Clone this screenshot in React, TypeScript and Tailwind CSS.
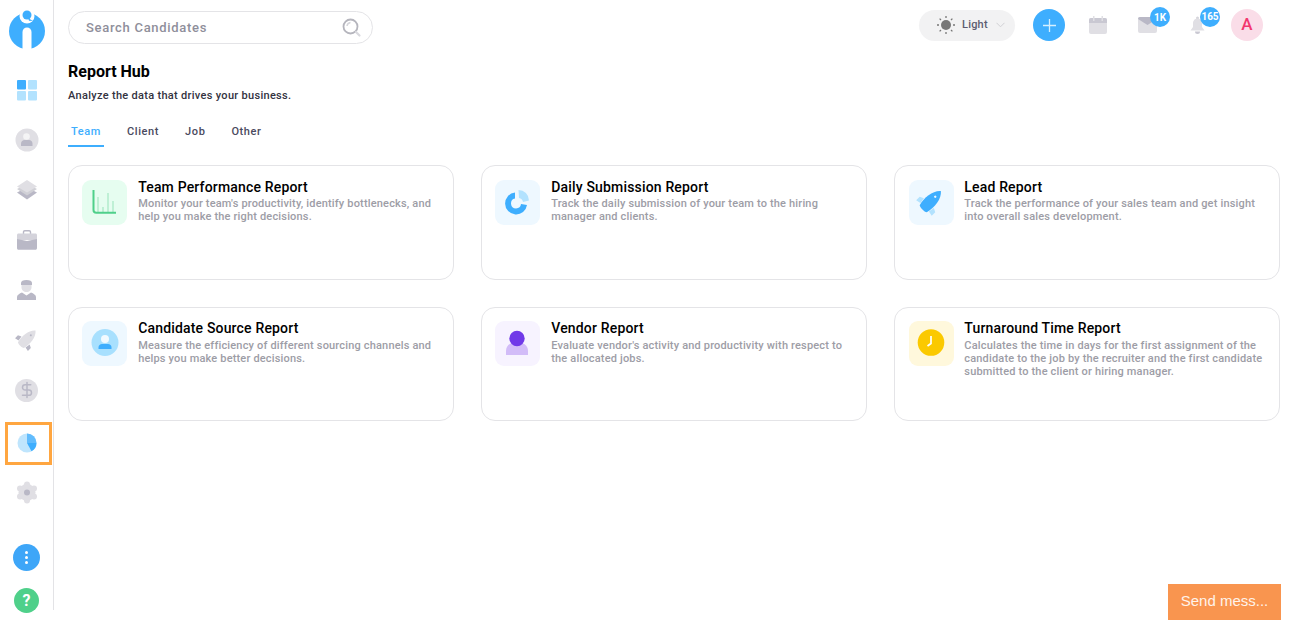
import type { ReactNode } from "react"
import { DollarSign } from "lucide-react"

const DARK = "#b9b8c6"
const LIGHT = "#e0dfe4"
const BLUE = "#3eaefe"
const SKY = "#b2e2fe"

function Rocket({ width, height, box, body, fin, dot }: { width: number; height: number; box: string; body: string; fin: string; dot: string }) {
    return (
        <svg width={width} height={height} viewBox={box}>
            <g transform="rotate(-45 22 21)">
                <path d="M19 14l-2-4h-5l1 5zM19 28l-2 4h-5l1-5z" fill={fin} />
                <path d="M11 16c9-2.500 20-1 25 5-5 6-16 7.500-25 5-1.500-2-1.500-8 0-10z" fill={body} />
                <circle cx="28" cy="21" r="1.200" fill={dot} />
            </g>
        </svg>
    )
}

function Logo() {
    return (
        <svg width="36" height="42" viewBox="0 0 36 42">
            <circle cx="18" cy="22" r="18" fill={BLUE} />
            <circle cx="18" cy="7" r="7.500" fill="#fff" />
            <path d="M13.500 42V23a4.500 4.500 0 0 1 9 0v19z" fill="#fff" />
            <circle cx="18" cy="6" r="4.500" fill={BLUE} />
            <path d="M19 9l5 3-4-.2z" fill={BLUE} />
        </svg>
    )
}

const sideIcons: ReactNode[] = [
    <svg key="dash" width="20" height="21" viewBox="0 0 20 21">
        <rect width="9" height="9.500" rx="1" fill={BLUE} />
        <rect x="11" width="9" height="9.500" rx="1" fill={SKY} />
        <rect y="11" width="9" height="9.500" rx="1" fill={SKY} />
        <rect x="11" y="11" width="9" height="9.500" rx="1" fill={SKY} />
    </svg>,
    <svg key="person" width="24" height="24" viewBox="0 0 24 24">
        <circle cx="12" cy="12" r="11.500" fill={LIGHT} />
        <circle cx="11.500" cy="8.500" r="3.300" fill="#f4f4f5" />
        <path d="M6 18v-2.500c0-2 1.800-3.500 3.500-3.500h4.500c1.800 0 3.500 1.500 3.500 3.500V18z" fill={DARK} />
    </svg>,
    <svg key="layers" width="20" height="20" viewBox="0 0 20 20">
        <path d="M0 12.500l10-5 10 5-10 7z" fill={DARK} />
        <path d="M0 9l10-5 10 5-10 6.500z" fill="#d0d0d6" />
        <path d="M0 6.500L10 0l10 6.500-10 6z" fill={LIGHT} />
    </svg>,
    <svg key="case" width="20" height="20" viewBox="0 0 20 20">
        <path d="M6.500 4V2c0-.8.500-1.300 1.300-1.300h4.400c.8 0 1.300.500 1.300 1.300v2" fill="none" stroke={DARK} strokeWidth="1.400" />
        <path d="M1.500 3.500h17c.8 0 1.500.7 1.500 1.500v5H0V5c0-.8.700-1.500 1.500-1.500z" fill="#d4d3db" />
        <path d="M0 9l10 2 10-2v9c0 1-.7 1.800-1.500 1.800h-17C.7 19.800 0 19 0 18z" fill={DARK} />
    </svg>,
    <svg key="agent" width="19" height="20" viewBox="0 0 19 20">
        <path d="M4 5V3c0-1.800 2-3 5.500-3S15 1.200 15 3v2z" fill={DARK} />
        <path d="M4.500 5h10v2.500c0 2.500-2.200 4.500-5 4.500s-5-2-5-4.500z" fill={LIGHT} />
        <path d="M0 20v-3c0-2 2.500-3.500 5-4.500l4.500 3 4.500-3c2.500 1 5 2.500 5 4.500v3z" fill={DARK} />
    </svg>,
    <Rocket key="rocket" width={25} height={24} box="6 8 30 29" body={LIGHT} fin={DARK} dot={DARK} />,
    <div key="dollar" className="flex h-[23px] w-[23px] items-center justify-center rounded-full bg-[#e0dfe4]">
        <DollarSign size={18} color={DARK} strokeWidth={2} />
    </div>,
]

function SideItem({ children }: { children: ReactNode }) {
    return <div className="flex h-[50px] w-full shrink-0 items-center justify-center">{children}</div>
}

function Sidebar() {
    return (
        <aside className="flex h-[610px] w-[54px] shrink-0 flex-col border-r border-[#e3e3e6]">
            <div className="flex h-[65px] shrink-0 items-start justify-center pt-[9px]">
                <Logo />
            </div>
            {sideIcons.map((icon, i) => (
                <SideItem key={i}>{icon}</SideItem>
            ))}
            <div className="mt-[7px] ml-[5px] flex h-[43px] w-[47px] shrink-0 items-center justify-center border-[3px] border-[#ffa640] pr-[4px] pb-[2px]">
                <svg width="20" height="20" viewBox="0 0 20 20">
                    <circle cx="10" cy="10" r="9.500" fill="#bfe5fd" />
                    <path d="M10 .5A9.500 9.500 0 0 1 19.500 10H10z" fill="#62bcfd" />
                    <path d="M10 10h9.500a9.500 9.500 0 0 1-5 8.300z" fill={BLUE} />
                </svg>
            </div>
            <div className="flex h-[54px] shrink-0 items-center justify-center">
                <svg width="22" height="23" viewBox="0 0 22 23">
                    <g fill={LIGHT}>
                        <circle cx="11" cy="11.500" r="8.500" />
                        <circle cx="11" cy="3.500" r="3" />
                        <circle cx="11" cy="19.500" r="3" />
                        <circle cx="4" cy="7.500" r="3" />
                        <circle cx="18" cy="7.500" r="3" />
                        <circle cx="4" cy="15.500" r="3" />
                        <circle cx="18" cy="15.500" r="3" />
                    </g>
                    <circle cx="11" cy="11.500" r="3" fill={DARK} />
                </svg>
            </div>
            <div className="mt-[25px] flex shrink-0 justify-center">
                <div className="flex h-[27px] w-[27px] flex-col items-center justify-center gap-[2px] rounded-full bg-[#3ea6f8]">
                    <span className="h-[3px] w-[3px] rounded-full bg-white" />
                    <span className="h-[3px] w-[3px] rounded-full bg-white" />
                    <span className="h-[3px] w-[3px] rounded-full bg-white" />
                </div>
            </div>
            <div className="mt-[17px] flex shrink-0 justify-center">
                <div className="flex h-[25px] w-[25px] items-center justify-center rounded-full bg-[#4fd08a] text-[16px] font-bold text-white">?</div>
            </div>
        </aside>
    )
}

function Badge({ text, className }: { text: string; className: string }) {
    return (
        <span className={`absolute flex h-[20px] w-[20px] items-center justify-center rounded-full bg-[#3eaefe] text-[10px] font-bold text-white ${className}`}>
            {text}
        </span>
    )
}

function Header() {
    return (
        <header className="flex h-[62px] w-[1212px] items-start justify-between">
            <div className="mt-[11px] flex h-[33px] w-[305px] items-center justify-between rounded-full border border-[#e4e4e7] pr-[10px] pl-[17px]">
                <span className="text-[13px] font-medium tracking-[0.7px] text-[#8f8f9b]">Search Candidates</span>
                <svg width="20" height="20" viewBox="0 0 20 20">
                    <circle cx="8.500" cy="8.500" r="7" fill="none" stroke="#b5b5bd" strokeWidth="1.800" />
                    <path d="M5 8a4 4 0 0 1 3.500-3.500" fill="none" stroke="#d5d5da" strokeWidth="1.400" />
                    <path d="M14 14l3.500 3.500" stroke="#d9d9de" strokeWidth="2.200" strokeLinecap="round" />
                </svg>
            </div>
            <div className="mt-[9px] mr-[17px] flex items-center">
                <div className="flex h-[31px] w-[96px] items-center rounded-full bg-[#f2f2f3] pl-[18px]">
                    <svg width="18" height="18" viewBox="0 0 18 18">
                        <circle cx="9" cy="9" r="5" fill="#777" />
                        <path d="M9 0v2M9 16v2M0 9h2M16 9h2M2.600 2.600L4 4M14 14l1.400 1.400M2.600 15.400L4 14M14 4l1.400-1.400" stroke="#777" strokeWidth="1.300" />
                    </svg>
                    <span className="ml-[7px] text-[11px] font-medium tracking-[0.2px] text-[#5c5c70]">Light</span>
                    <svg className="ml-[8px]" width="9" height="6" viewBox="0 0 9 6">
                        <path d="M.5.8l4 4 4-4" fill="none" stroke="#d0d0d4" strokeWidth="1" />
                    </svg>
                </div>
                <div className="ml-[18px] flex h-[32px] w-[32px] items-center justify-center rounded-full bg-[#3eaefe]">
                    <svg width="13" height="13" viewBox="0 0 13 13">
                        <path d="M6.500 0v13M0 6.500h13" stroke="#d4efff" strokeWidth="1.300" />
                    </svg>
                </div>
                <svg className="ml-[24px]" width="18" height="18" viewBox="0 0 18 18">
                    <rect y="2" width="18" height="16" rx="2" fill={LIGHT} />
                    <path d="M2 2h14a2 2 0 0 1 2 2v3H0V4a2 2 0 0 1 2-2z" fill="#c9c8d2" />
                    <rect x="4" width="1.500" height="5" fill={LIGHT} />
                    <rect x="12.500" width="1.500" height="5" fill={LIGHT} />
                </svg>
                <div className="relative ml-[31px] h-[16px] w-[19px]">
                    <svg className="block" width="19" height="16" viewBox="0 0 19 16">
                        <rect width="19" height="16" rx="2" fill={LIGHT} />
                        <path d="M0 2a2 2 0 0 1 2-2h15a2 2 0 0 1 2 2l-9.500 6z" fill={DARK} />
                    </svg>
                    <Badge text="1K" className="-top-[10px] left-[12px]" />
                </div>
                <div className="relative ml-[33px] h-[19px] w-[15px]">
                    <svg className="block" width="15" height="19" viewBox="0 0 15 19">
                        <circle cx="7.500" cy="2" r="1.500" fill="#d5d4db" />
                        <path d="M7.500 2.500c2.800 0 4.500 2.300 4.500 5v3.500l2.500 3.500H.5L3 11V7.500c0-2.700 1.700-5 4.500-5z" fill={LIGHT} />
                        <path d="M5 15.500h5a2.500 2.500 0 0 1-5 0z" fill="#c9c8d2" />
                    </svg>
                    <Badge text="165" className="-top-[9px] left-[10px]" />
                </div>
                <div className="ml-[26px] flex h-[32px] w-[32px] items-center justify-center rounded-full bg-[#fadde8] text-[17px] font-medium text-[#f2386e]">A</div>
            </div>
        </header>
    )
}

const reports: { title: string; text: string; tint: string; icon: ReactNode }[] = [
    {
        title: "Team Performance Report",
        text: "Monitor your team's productivity, identify bottlenecks, and help you make the right decisions.",
        tint: "bg-[#e6fdf0]",
        icon: (
            <svg width="45" height="45" viewBox="0 0 45 45">
                <path d="M16 17v15M21 27v5M26 13v19M31 21v11" stroke="#bff0d5" strokeWidth="2" />
                <path d="M11.500 10v20c0 1.800 1 2.800 2.800 2.800H34" fill="none" stroke="#4fd08a" strokeWidth="2" />
            </svg>
        ),
    },
    {
        title: "Daily Submission Report",
        text: "Track the daily submission of your team to the hiring manager and clients.",
        tint: "bg-[#eef8ff]",
        icon: (
            <svg width="45" height="45" viewBox="0 0 45 45">
                <path d="M20 12.500A11 11 0 1 0 32 25l-6-1a5 5 0 1 1-6-5.500z" fill={BLUE} />
                <path d="M23.500 10A10.500 10.500 0 0 1 34 20.500l-6 1.500a5 5 0 0 0-4-4z" fill={SKY} />
            </svg>
        ),
    },
    {
        title: "Lead Report",
        text: "Track the performance of your sales team and get insight into overall sales development.",
        tint: "bg-[#eef8ff]",
        icon: <Rocket width={45} height={45} box="0 0 45 45" body={BLUE} fin={SKY} dot="#eef8ff" />,
    },
    {
        title: "Candidate Source Report",
        text: "Measure the efficiency of different sourcing channels and helps you make better decisions.",
        tint: "bg-[#eef8ff]",
        icon: (
            <svg width="45" height="45" viewBox="0 0 45 45">
                <circle cx="23" cy="21.500" r="13.500" fill="#a8e0fe" />
                <circle cx="23" cy="18" r="4" fill="#f2faff" />
                <path d="M16.500 28v-1.500c0-2 1.500-3.500 3.500-3.500h6c2 0 3.500 1.500 3.500 3.500V28z" fill={BLUE} />
            </svg>
        ),
    },
    {
        title: "Vendor Report",
        text: "Evaluate vendor's activity and productivity with respect to the allocated jobs.",
        tint: "bg-[#f7f3ff]",
        icon: (
            <svg width="45" height="45" viewBox="0 0 45 45">
                <path d="M11 34v-4c0-5.500 4.500-9 11-9s11 3.500 11 9v4z" fill="#d2bcf8" />
                <circle cx="22" cy="17.500" r="7.700" fill="#7039e8" />
            </svg>
        ),
    },
    {
        title: "Turnaround Time Report",
        text: "Calculates the time in days for the first assignment of the candidate to the job by the recruiter and the first candidate submitted to the client or hiring manager.",
        tint: "bg-[#fff8dc]",
        icon: (
            <svg width="45" height="45" viewBox="0 0 45 45">
                <circle cx="22" cy="21.500" r="13.300" fill="#fbc900" />
                <path d="M22 15v7.500L18.500 25" fill="none" stroke="#fff" strokeWidth="1.700" />
            </svg>
        ),
    },
]

function ReportCard({ title, text, tint, icon }: { title: string; text: string; tint: string; icon: ReactNode }) {
    return (
        <div className="flex h-[114.5px] gap-[10.8px] rounded-[14px] border border-[#e4e4e7] p-[13.4px]">
            <div className={`h-[45px] w-[45px] shrink-0 rounded-[9px] ${tint}`}>{icon}</div>
            <div>
                <h3 className="-mt-[1px] text-[14px] leading-[16px] font-medium tracking-[0.17px] text-black">{title}</h3>
                <p className="mt-[2.5px] text-[11px] leading-[13px] font-medium tracking-[0.17px] text-[#9d9da6]">{text}</p>
            </div>
        </div>
    )
}

export default function App() {
    return (
        <div className="relative flex h-[620px] w-full overflow-hidden bg-white font-['Roboto',sans-serif]">
            <Sidebar />
            <main className="min-w-0 flex-1 pl-[14px]">
                <Header />
                <h1 className="text-[16px] leading-[20px] font-bold text-black">Report Hub</h1>
                <p className="mt-[7px] text-[11px] leading-[14px] font-medium tracking-[0.3px] text-[#33333f]">Analyze the data that drives your business.</p>
                <nav className="mt-[14px] flex gap-5 text-[11px] leading-[17px] font-medium tracking-[0.6px] text-[#4a4a5e]">
                    <span className="border-b-2 border-[#3eaefe] px-[3px] pt-[6px] pb-[5px] text-[#3eaefe]">Team</span>
                    <span className="px-[3px] pt-[6px]">Client</span>
                    <span className="px-[3px] pt-[6px]">Job</span>
                    <span className="px-[3px] pt-[6px]">Other</span>
                </nav>
                <div className="mt-[18.4px] grid w-[1212.2px] grid-cols-3 gap-[27px]">
                    {reports.map(r => (
                        <ReportCard key={r.title} {...r} />
                    ))}
                </div>
            </main>
            <button className="absolute right-[13px] bottom-0 h-[36px] w-[113px] bg-[#f9954f] pb-[2px] font-['Liberation_Sans',sans-serif] text-[15px] text-[#fff3ea]">
                Send mess...
            </button>
        </div>
    )
}
